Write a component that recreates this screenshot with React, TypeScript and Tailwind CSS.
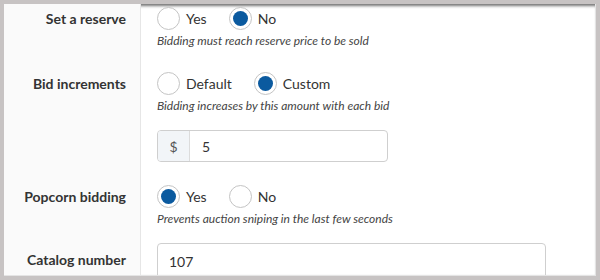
import React from "react";

function Radio({ checked, label, gap }: { checked: boolean; label: string; gap: string }) {
  return (
    <div className={`flex items-center ${gap}`}>
      <span className="w-[23px] h-[23px] rounded-full border border-[#c4c4c4] bg-white flex items-center justify-center shrink-0">
        {checked && <span className="w-[15px] h-[15px] rounded-full bg-[#0b5a9f]" />}
      </span>
      <span className="ml-[6px] text-[14px] text-[#333]">{label}</span>
    </div>
  );
}

function Label({ text, h }: { text: string; h: string }) {
  return (
    <div className={`w-[137px] shrink-0 bg-[#fafafa] border-r border-[#e6e6e6] pr-[14px] text-right`}>
      <div className={`${h} flex items-center justify-end text-[14px] font-bold text-[#333]`}>{text}</div>
    </div>
  );
}

export default function App() {
  return (
    <div className="w-[600px] h-[280px] bg-[#c7c3c3] p-[4px] overflow-hidden" style={{ fontFamily: "Lato, 'Noto Sans', sans-serif" }}>
      <div className="w-[592px] h-[272px] bg-white overflow-hidden shadow-[inset_2px_2px_3px_rgba(0,0,0,0.55)] border-r border-b border-[#e4e4e4] flex flex-col">
        {/* Row 1 */}
        <div className="flex">
          <div className="w-[137px] shrink-0 bg-[#fafafa] border-r border-[#e6e6e6] pr-[14px] pt-[3px] pb-[20px]">
            <div className="h-[22px] flex items-center justify-end text-[14px] font-bold text-[#333]">Set a reserve</div>
          </div>
          <div className="pl-[16px] pt-[3px] pb-[20px]">
            <div className="flex h-[22px] items-center">
              <Radio checked={false} label="Yes" gap="mr-[22px]" />
              <Radio checked={true} label="No" gap="" />
            </div>
            <div className="mt-[4px] text-[12px] leading-4 italic text-[#444]">Bidding must reach reserve price to be sold</div>
          </div>
        </div>
        {/* Row 2 */}
        <div className="flex">
          <div className="w-[137px] shrink-0 bg-[#fafafa] border-r border-[#e6e6e6] pr-[14px] pt-[3px] pb-[20px]">
            <div className="h-[22px] flex items-center justify-end text-[14px] font-bold text-[#333]">Bid increments</div>
          </div>
          <div className="pl-[16px] pt-[3px] pb-[20px]">
            <div className="flex h-[22px] items-center">
              <Radio checked={false} label="Default" gap="mr-[22px]" />
              <Radio checked={true} label="Custom" gap="" />
            </div>
            <div className="mt-[4px] text-[12px] leading-4 italic text-[#444]">Bidding increases by this amount with each bid</div>
            <div className="mt-[16px] w-[231px] h-[32px] flex border border-[#cfcfcf] rounded-[4px] overflow-hidden">
              <div className="w-[32px] bg-[#f2f5f8] border-r border-[#dcdcdc] flex items-center justify-center text-[14px] text-[#555]">$</div>
              <div className="flex items-center pl-[12px] text-[14px] text-[#333]">5</div>
            </div>
          </div>
        </div>
        {/* Row 3 */}
        <div className="flex">
          <div className="w-[137px] shrink-0 bg-[#fafafa] border-r border-[#e6e6e6] pr-[14px] pt-[3px] pb-[16px]">
            <div className="h-[22px] flex items-center justify-end text-[14px] font-bold text-[#333]">Popcorn bidding</div>
          </div>
          <div className="pl-[16px] pt-[3px] pb-[16px]">
            <div className="flex h-[22px] items-center">
              <Radio checked={true} label="Yes" gap="mr-[22px]" />
              <Radio checked={false} label="No" gap="" />
            </div>
            <div className="mt-[4px] text-[12px] leading-4 italic text-[#444]">Prevents auction sniping in the last few seconds</div>
          </div>
        </div>
        {/* Row 4 */}
        <div className="flex flex-1">
          <div className="w-[137px] shrink-0 bg-[#fafafa] border-r border-[#e6e6e6] pr-[14px]">
            <div className="h-[32px] flex items-center justify-end text-[14px] font-bold text-[#333]">Catalog number</div>
          </div>
          <div className="pl-[16px]">
            <div className="w-[389px] h-[40px] border border-[#cfcfcf] rounded-[4px] pl-[11px] pt-[7px] text-[14px] text-[#333]">107</div>
          </div>
        </div>
      </div>
    </div>
  );
}
